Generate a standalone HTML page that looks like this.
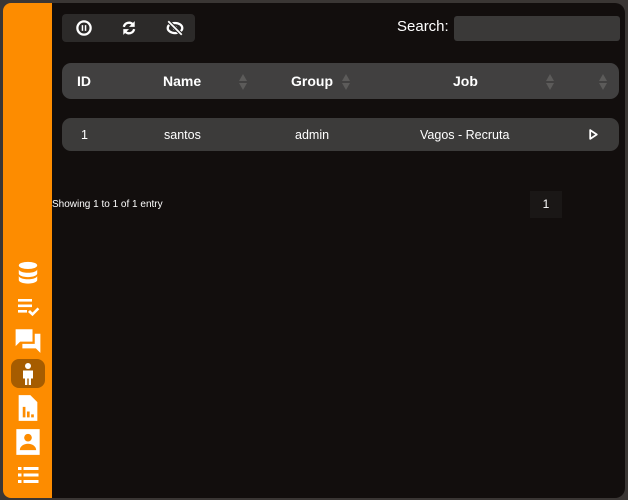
<!DOCTYPE html>
<html><head><style>
*{margin:0;padding:0;box-sizing:border-box}
body{width:628px;height:500px;background:#3a3634;font-family:"Liberation Sans",sans-serif;position:relative;overflow:hidden}
.side{position:absolute;left:3px;top:3px;width:50px;height:495px;background:#fd8c00;border-radius:8px 0 0 8px}
.main{position:absolute;left:52px;top:3px;width:573px;height:495px;background:#120e0d;border-radius:0 10px 10px 0}
.tb{position:absolute;left:10px;top:11px;width:133px;height:28px;background:#2c2a29;border-radius:4px}
.hd,.row{position:absolute;left:10px;width:557px;background:#3c3b3a;border-radius:9px;color:#fff}
.hd{top:60px;height:36px;background:#414040}
.row{top:115px;height:33px}
.t{position:absolute;font-size:14px;font-weight:bold;top:10px}
.r{position:absolute;font-size:12.5px;top:10px}
.ar{position:absolute;top:11px;width:9px;height:16px}
.ar:before,.ar:after{content:"";position:absolute;left:0;border-left:4.5px solid transparent;border-right:4.5px solid transparent}
.ar:before{top:0;border-bottom:7px solid #5c5b5a}
.ar:after{top:9px;border-top:7px solid #5c5b5a}
.ic{position:absolute;left:0;width:50px;display:flex;justify-content:center}
</style></head><body>
<div class="side">
<svg class="ic" style="top:257px" width="50" height="26" viewBox="0 0 24 24"><g fill="#fff"><ellipse cx="12" cy="5" rx="8.5" ry="3.3"/><path d="M3.5 8.5c0 1.8 3.8 3.3 8.5 3.3s8.5-1.5 8.5-3.3v4c0 1.8-3.8 3.3-8.5 3.3s-8.5-1.5-8.5-3.3z"/><path d="M3.5 14.5c0 1.8 3.8 3.3 8.5 3.3s8.5-1.5 8.5-3.3v4c0 1.8-3.8 3.3-8.5 3.3s-8.5-1.5-8.5-3.3z"/></g></svg>
<svg class="ic" style="top:292px" width="50" height="24" viewBox="0 0 24 24"><g fill="#fff"><rect x="2" y="4" width="14" height="2.6"/><rect x="2" y="9.5" width="14" height="2.6"/><rect x="2" y="15" width="9" height="2.6"/><path d="M12 17l2-2 2.5 2.5 5-5 1.8 1.8-6.8 6.8z"/></g></svg>
<svg class="ic" style="top:324px" width="50" height="27" viewBox="0 0 24 24"><g fill="#fff"><path d="M1 2h15v11H5l-4 4z"/><path d="M18 6h5v17l-4-4H7v-4h11z"/></g></svg>
<div style="position:absolute;left:8px;top:356px;width:34px;height:29px;background:#a65c00;border-radius:8px"></div>
<svg class="ic" style="top:359px" width="50" height="24" viewBox="0 0 24 24"><g fill="#fff"><circle cx="12" cy="4" r="3"/><path d="M7 8.5h10v8h-2v6.5h-2.3v-6.5h-1.4v6.5H9v-6.5H7z"/></g></svg>
<svg class="ic" style="top:391px" width="50" height="28" viewBox="0 0 24 24"><path fill="#fff" d="M4 1h10l6 6v16H4zM7.5 11v9h2.3v-9zm3.6 4v5h2.3v-5zm3.6 2.5v2.5H17v-2.5z"/></svg>
<svg class="ic" style="top:425px" width="50" height="28" viewBox="0 0 24 24"><path fill="#fff" d="M2 1h20v22H2zM12 5a3.3 3.3 0 1 0 0 6.6A3.3 3.3 0 0 0 12 5zM5 19h14c0-3.3-3.3-5.5-7-5.5S5 15.7 5 19z"/></svg>
<svg class="ic" style="top:460px" width="50" height="24" viewBox="0 0 24 24"><g fill="#fff"><rect x="2" y="4" width="3.5" height="3"/><rect x="7.5" y="4" width="15" height="3"/><rect x="2" y="10.5" width="3.5" height="3"/><rect x="7.5" y="10.5" width="15" height="3"/><rect x="2" y="17" width="3.5" height="3"/><rect x="7.5" y="17" width="15" height="3"/></g></svg>
</div>
<div class="main">
<div class="tb">
<svg style="position:absolute;left:14px;top:6px" width="16" height="16" viewBox="0 0 14 14"><circle cx="7" cy="7" r="5.8" fill="none" stroke="#fff" stroke-width="2"/><rect x="5" y="4.5" width="1.3" height="5" fill="#fff"/><rect x="7.7" y="4.5" width="1.3" height="5" fill="#fff"/></svg>
<svg style="position:absolute;left:59px;top:6px" width="16" height="16" viewBox="0 0 14 14"><path d="M2.5 6a4.6 4.6 0 0 1 8-2M11.5 8a4.6 4.6 0 0 1-8 2" fill="none" stroke="#fff" stroke-width="2"/><path d="M12 1v5H7zM2 13V8h5z" fill="#fff"/></svg>
<svg style="position:absolute;left:104px;top:6px" width="18" height="16" viewBox="0 0 16 14"><ellipse cx="8" cy="7" rx="6.5" ry="4.5" fill="none" stroke="#fff" stroke-width="2"/><circle cx="8" cy="7" r="2" fill="#fff"/><path d="M2 1l12 12" stroke="#2c2a29" stroke-width="3.5"/><path d="M2 1l12 12" stroke="#fff" stroke-width="1.6"/></svg>
</div>
<div style="position:absolute;left:345px;top:15px;color:#fff;font-size:15px">Search:</div>
<div style="position:absolute;left:402px;top:13px;width:166px;height:25px;background:#3a3938;border-radius:3px"></div>
<div class="hd">
<span class="t" style="left:15px">ID</span>
<span class="t" style="left:101px">Name</span><span class="ar" style="left:177px"></span>
<span class="t" style="left:229px">Group</span><span class="ar" style="left:280px"></span>
<span class="t" style="left:391px">Job</span><span class="ar" style="left:484px"></span><span class="ar" style="left:537px"></span>
</div>
<div class="row">
<span class="r" style="left:19px">1</span>
<span class="r" style="left:102px">santos</span>
<span class="r" style="left:233px">admin</span>
<span class="r" style="left:358px">Vagos - Recruta</span>
<svg style="position:absolute;left:526px;top:10px" width="11" height="13" viewBox="0 0 10 11"><path d="M2 1.5v8l6-4z" fill="none" stroke="#fff" stroke-width="1.6" stroke-linejoin="round"/></svg>
</div>
<div style="position:absolute;left:0;top:196px;color:#fff;font-size:10px">Showing 1 to 1 of 1 entry</div>
<div style="position:absolute;left:478px;top:188px;width:32px;height:27px;background:#1a1716;color:#fff;font-size:12px;text-align:center;line-height:27px">1</div>
</div>
</body></html>
